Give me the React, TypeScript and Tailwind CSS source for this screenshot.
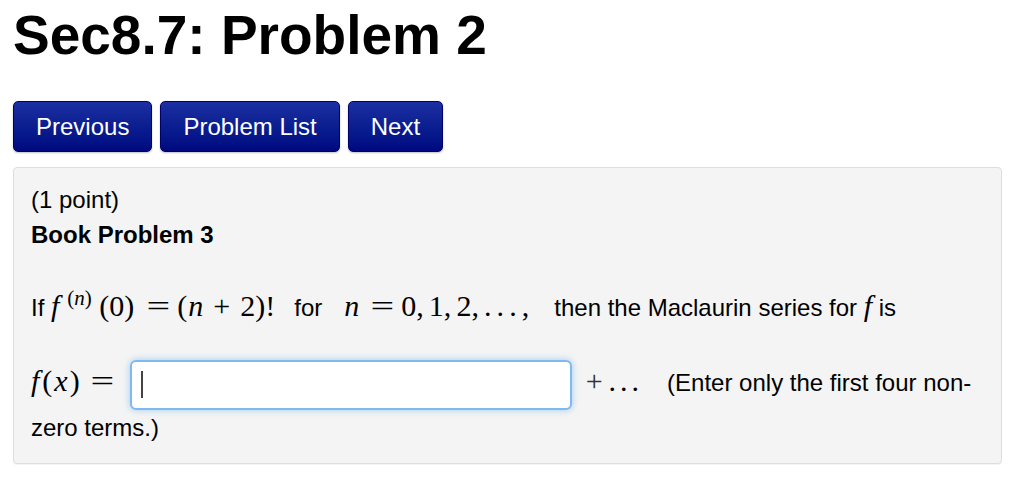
import React from 'react';

const sans = { fontFamily: '"Liberation Sans", Arial, sans-serif' };
const serif = { fontFamily: '"Liberation Serif", "Times New Roman", serif' };

function M({ children }: { children: React.ReactNode }) {
  return (
    <span className="text-[30px] italic" style={serif}>
      {children}
    </span>
  );
}

function R({ children, className = '' }: { children: React.ReactNode; className?: string }) {
  return <span className={`not-italic ${className}`}>{children}</span>;
}

// equals sign, stretched a little like the TeX one
function Eq({ w }: { w: string }) {
  return (
    <span className={`not-italic inline-block text-center ${w}`}>
      <span className="inline-block scale-x-140">=</span>
    </span>
  );
}

function NavButton({ label }: { label: string }) {
  return (
    <button className="h-[51px] px-[22px] rounded-[5px] border border-[#00006a] bg-gradient-to-b from-[#1b2fa2] to-[#00087f] text-white text-[24px] shadow-[0_1px_2px_rgba(0,0,0,0.25)]">
      {label}
    </button>
  );
}

export default function App() {
  return (
    <div className="min-h-[484px] bg-white text-black pl-[13px] pt-[5px]" style={sans}>
      <h1 className="text-[55px] leading-[60px] font-bold">Sec8.7: Problem 2</h1>

      <div className="mt-[36px] flex gap-2">
        <NavButton label="Previous" />
        <NavButton label="Problem List" />
        <NavButton label="Next" />
      </div>

      <div className="mt-[15px] w-[989px] bg-[#f4f4f4] border border-[#dedede] rounded-[4px] shadow-[0_1px_1px_rgba(0,0,0,0.05)] pl-[17px] pr-[17px] pt-[14px] pb-[18px] text-[24px] leading-[35px]">
        <div>(1 point)</div>
        <div className="font-bold">Book Problem 3</div>

        <p className="mt-[36px]">
          If{' '}
          <M>
            <span className="mr-[1px]">f</span>
            <span className="inline-block w-[28px] ml-[7px] text-[21px] leading-none align-[11px]">
              <R>(</R>n<R>)</R>
            </span>
            <R className="ml-[4px]">(0)</R>
            <Eq w="ml-[12px] w-[25px]" />
            <R className="ml-[6px]">(</R>
            <span className="ml-[1px]">n</span>
            <R className="ml-[10px] mr-[10px]">+</R>
            <R>2)!</R>
          </M>
          <span className="ml-[19px] mr-[22px]">for</span>
          <M>
            n
            <Eq w="ml-[12px] w-[23px]" />
            <span className="not-italic ml-[7px] inline-flex w-[128px] justify-between">
              <span>0,</span>
              <span>1,</span>
              <span>2,</span>
              <span>.</span>
              <span>.</span>
              <span>.</span>
              <span>,</span>
            </span>
          </M>
          <span className="ml-[25px]">then the Maclaurin series for </span>
          <M>f</M> is
        </p>

        <p className="mt-[35px]">
          <M>
            <span className="mr-[3px]">f</span>
            <R>(</R>
            <span className="mx-[2px]">x</span>
            <R>)</R>
            <Eq w="ml-[11px] w-[23px]" />
          </M>
          <span className="relative inline-block align-middle ml-[16px] mr-[14px]">
            <input
              type="text"
              className="block w-[442px] h-[50px] rounded-[6px] bg-white border-2 border-[#7fb9ef] outline-none shadow-[0_0_7px_rgba(102,175,233,0.6)] px-3"
            />
            <span className="absolute left-[11px] top-[11px] w-[2px] h-[27px] bg-[#444]" />
          </span>
          <M>
            <R className="text-[#333]">+</R>
            <R className="ml-[6px] tracking-[4px]">...</R>
          </M>
          <span className="ml-[24px]">
            (Enter only the first four non-
            <br />
            zero terms.)
          </span>
        </p>
      </div>
    </div>
  );
}
